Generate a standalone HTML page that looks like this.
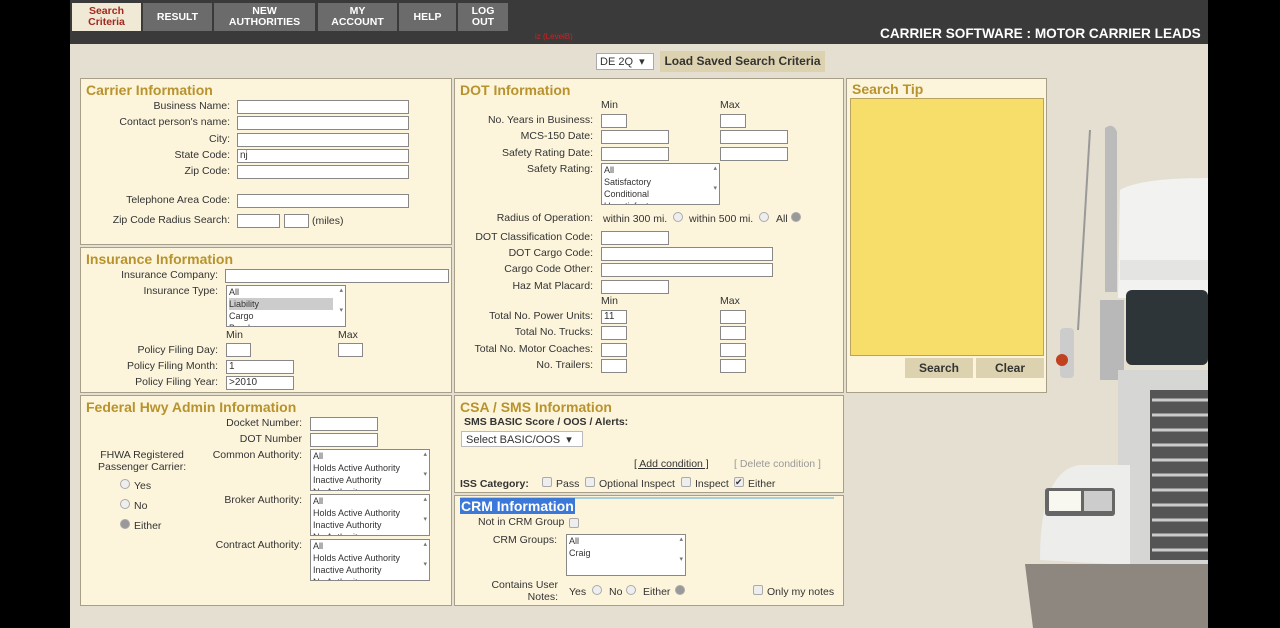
<!DOCTYPE html>
<html><head><meta charset="utf-8"><style>
*{box-sizing:border-box;margin:0;padding:0}
body{width:1280px;height:628px;background:#000;position:relative;overflow:hidden;font-family:"Liberation Sans",Arial,sans-serif;font-size:11px;color:#333}
#pg{position:absolute;left:70px;top:0;width:1138px;height:628px;background:#e5dfd1}
.a{position:absolute}
.hdr{left:70px;top:0;width:1138px;height:44px;background:#3a3a3a}
.tab{position:absolute;top:3px;height:28px;background:#6b6b6b;color:#fff;font-weight:bold;font-size:10.5px;text-align:center;line-height:11px;display:flex;align-items:center;justify-content:center}
.p{position:absolute;background:#fcf5dc;border:1px solid #a89f88}
.t{position:absolute;left:5px;top:3px;color:#b8922c;font-weight:bold;font-size:14px}
.l{position:absolute;text-align:right;font-size:10.5px;color:#333;white-space:nowrap}
.i{position:absolute;height:14px;background:#fff;border:1px solid #888;font-size:10px;padding-left:2px;line-height:12px}
.s{position:absolute;background:#fff;border:1px solid #888;font-size:9px;line-height:12px;padding-left:2px;overflow:hidden}
.s:after{content:"▴\A\A▾";white-space:pre;position:absolute;right:2px;top:0;font-size:7px;line-height:10px;color:#777}
.cb{position:absolute;width:10px;height:10px;border:1px solid #aaa;background:#eee;border-radius:2px}
.rd{position:absolute;width:10px;height:10px;border:1px solid #aaa;background:#eee;border-radius:50%}
.btn{position:absolute;background:#ddd2b0;font-weight:bold;font-size:12px;color:#333;text-align:center}
</style></head><body>
<div id="pg"></div>
<div class="a hdr"></div>
<div class="tab" style="left:72px;width:69px;background:#efe9d6;color:#a3271c">Search<br>Criteria</div>
<div class="tab" style="left:143px;width:69px">RESULT</div>
<div class="tab" style="left:214px;width:101px">NEW<br>AUTHORITIES</div>
<div class="tab" style="left:318px;width:79px">MY<br>ACCOUNT</div>
<div class="tab" style="left:399px;width:57px">HELP</div>
<div class="tab" style="left:458px;width:50px">LOG<br>OUT</div>
<div class="a" style="left:535px;top:32px;color:#c22;font-size:8px">iz (LevelB)</div>
<div class="a" style="left:880px;top:26px;color:#fff;font-weight:bold;font-size:13.6px">CARRIER SOFTWARE : MOTOR CARRIER LEADS</div>

<!-- truck -->
<svg class="a" style="left:1020px;top:100px" width="188" height="528" viewBox="0 0 188 528">
<path d="M85 28 q8-6 12 4 v160 h-12z" fill="#bbb"/>
<path d="M70 30 l-12 200" stroke="#999" stroke-width="2"/>
<rect x="40" y="228" width="14" height="50" fill="#ccc" rx="4"/>
<path d="M100 90 q20-12 88-12 v120 h-90z" fill="#f2f2f0"/>
<rect x="100" y="160" width="88" height="20" fill="#e4e4e2"/>
<rect x="106" y="190" width="82" height="75" fill="#2e3538" rx="6"/>
<rect x="80" y="200" width="24" height="80" fill="#b8b8b8"/>
<path d="M98 270 h90 v270 h-90z" fill="#d6d6d4"/>
<rect x="130" y="290" width="58" height="170" fill="#555"/>
<g stroke="#ccc" stroke-width="3">
<line x1="132" y1="300" x2="188" y2="300"/><line x1="132" y1="315" x2="188" y2="315"/><line x1="132" y1="330" x2="188" y2="330"/><line x1="132" y1="345" x2="188" y2="345"/><line x1="132" y1="360" x2="188" y2="360"/><line x1="132" y1="375" x2="188" y2="375"/><line x1="132" y1="390" x2="188" y2="390"/><line x1="132" y1="405" x2="188" y2="405"/><line x1="132" y1="420" x2="188" y2="420"/><line x1="132" y1="435" x2="188" y2="435"/><line x1="132" y1="450" x2="188" y2="450"/></g>
<path d="M20 460 q0-90 40-95 h50 v100z" fill="#ededeb"/>
<rect x="25" y="388" width="70" height="28" fill="#666" rx="3"/>
<rect x="29" y="391" width="32" height="20" fill="#f8f8f0"/>
<rect x="64" y="391" width="28" height="20" fill="#ccc"/>
<path d="M5 464 h183 v64 h-175z" fill="#8d8780"/>
<circle cx="42" cy="260" r="6" fill="#c04020"/>
</svg>

<!-- top controls -->
<div class="a" style="left:596px;top:53px;width:58px;height:17px;background:#fff;border:1px solid #aaa;font-size:11px;padding:1px 3px">DE 2Q &nbsp;▾</div>
<div class="btn" style="left:660px;top:51px;width:165px;height:21px;line-height:21px">Load Saved Search Criteria</div>

<!-- Carrier -->
<div class="p" style="left:80px;top:78px;width:372px;height:167px"><div class="t">Carrier Information</div></div>
<div class="l" style="right:1050px;top:100px">Business Name:</div><div class="i" style="left:237px;top:100px;width:172px"></div>
<div class="l" style="right:1050px;top:116px">Contact person's name:</div><div class="i" style="left:237px;top:116px;width:172px"></div>
<div class="l" style="right:1050px;top:133px">City:</div><div class="i" style="left:237px;top:133px;width:172px"></div>
<div class="l" style="right:1050px;top:149px">State Code:</div><div class="i" style="left:237px;top:149px;width:172px">nj</div>
<div class="l" style="right:1050px;top:165px">Zip Code:</div><div class="i" style="left:237px;top:165px;width:172px"></div>
<div class="l" style="right:1050px;top:194px">Telephone Area Code:</div><div class="i" style="left:237px;top:194px;width:172px"></div>
<div class="l" style="right:1050px;top:214px">Zip Code Radius Search:</div><div class="i" style="left:237px;top:214px;width:43px"></div><div class="i" style="left:284px;top:214px;width:25px"></div><div class="l" style="left:312px;top:215px">(miles)</div>

<!-- Insurance -->
<div class="p" style="left:80px;top:247px;width:372px;height:146px"><div class="t">Insurance Information</div></div>
<div class="l" style="right:1062px;top:269px">Insurance Company:</div><div class="i" style="left:225px;top:269px;width:224px"></div>
<div class="l" style="right:1062px;top:285px">Insurance Type:</div>
<div class="s" style="left:226px;top:285px;width:120px;height:42px">All<br><span style="background:#ccc;display:block;margin-right:12px">Liability</span>Cargo<br>Bond</div>
<div class="l" style="left:226px;top:329px">Min</div><div class="l" style="left:338px;top:329px">Max</div>
<div class="l" style="right:1062px;top:344px">Policy Filing Day:</div><div class="i" style="left:226px;top:343px;width:25px"></div><div class="i" style="left:338px;top:343px;width:25px"></div>
<div class="l" style="right:1062px;top:360px">Policy Filing Month:</div><div class="i" style="left:226px;top:360px;width:68px">1</div>
<div class="l" style="right:1062px;top:376px">Policy Filing Year:</div><div class="i" style="left:226px;top:376px;width:68px">&gt;2010</div>

<!-- Federal -->
<div class="p" style="left:80px;top:395px;width:372px;height:211px"><div class="t">Federal Hwy Admin Information</div></div>
<div class="l" style="right:978px;top:417px">Docket Number:</div><div class="i" style="left:310px;top:417px;width:68px"></div>
<div class="l" style="right:978px;top:433px">DOT Number</div><div class="i" style="left:310px;top:433px;width:68px"></div>
<div class="l" style="left:98px;top:449px;text-align:center">FHWA Registered<br>Passenger Carrier:</div>
<div class="l" style="right:978px;top:449px">Common Authority:</div>
<div class="s" style="left:310px;top:449px;width:120px;height:42px">All<br>Holds Active Authority<br>Inactive Authority<br>No Authority</div>
<div class="rd" style="left:120px;top:479px"></div><div class="l" style="left:134px;top:480px">Yes</div>
<div class="rd" style="left:120px;top:499px"></div><div class="l" style="left:134px;top:500px">No</div>
<div class="rd" style="left:120px;top:519px;background:#999"></div><div class="l" style="left:134px;top:520px">Either</div>
<div class="l" style="right:978px;top:494px">Broker Authority:</div>
<div class="s" style="left:310px;top:494px;width:120px;height:42px">All<br>Holds Active Authority<br>Inactive Authority<br>No Authority</div>
<div class="l" style="right:978px;top:539px">Contract Authority:</div>
<div class="s" style="left:310px;top:539px;width:120px;height:42px">All<br>Holds Active Authority<br>Inactive Authority<br>No Authority</div>

<!-- DOT -->
<div class="p" style="left:454px;top:78px;width:390px;height:315px"><div class="t">DOT Information</div></div>
<div class="l" style="left:601px;top:99px">Min</div><div class="l" style="left:720px;top:99px">Max</div>
<div class="l" style="right:687px;top:114px">No. Years in Business:</div><div class="i" style="left:601px;top:114px;width:26px"></div><div class="i" style="left:720px;top:114px;width:26px"></div>
<div class="l" style="right:687px;top:130px">MCS-150 Date:</div><div class="i" style="left:601px;top:130px;width:68px"></div><div class="i" style="left:720px;top:130px;width:68px"></div>
<div class="l" style="right:687px;top:147px">Safety Rating Date:</div><div class="i" style="left:601px;top:147px;width:68px"></div><div class="i" style="left:720px;top:147px;width:68px"></div>
<div class="l" style="right:687px;top:163px">Safety Rating:</div>
<div class="s" style="left:601px;top:163px;width:119px;height:42px">All<br>Satisfactory<br>Conditional<br>Unsatisfactory</div>
<div class="l" style="right:687px;top:212px">Radius of Operation:</div>
<div class="l" style="left:603px;top:213px">within 300 mi.</div><div class="rd" style="left:673px;top:212px"></div>
<div class="l" style="left:689px;top:213px">within 500 mi.</div><div class="rd" style="left:759px;top:212px"></div>
<div class="l" style="left:776px;top:213px">All</div><div class="rd" style="left:791px;top:212px;background:#999"></div>
<div class="l" style="right:687px;top:231px">DOT Classification Code:</div><div class="i" style="left:601px;top:231px;width:68px"></div>
<div class="l" style="right:687px;top:247px">DOT Cargo Code:</div><div class="i" style="left:601px;top:247px;width:172px"></div>
<div class="l" style="right:687px;top:263px">Cargo Code Other:</div><div class="i" style="left:601px;top:263px;width:172px"></div>
<div class="l" style="right:687px;top:280px">Haz Mat Placard:</div><div class="i" style="left:601px;top:280px;width:68px"></div>
<div class="l" style="left:601px;top:295px">Min</div><div class="l" style="left:720px;top:295px">Max</div>
<div class="l" style="right:687px;top:310px">Total No. Power Units:</div><div class="i" style="left:601px;top:310px;width:26px">11</div><div class="i" style="left:720px;top:310px;width:26px"></div>
<div class="l" style="right:687px;top:326px">Total No. Trucks:</div><div class="i" style="left:601px;top:326px;width:26px"></div><div class="i" style="left:720px;top:326px;width:26px"></div>
<div class="l" style="right:687px;top:343px">Total No. Motor Coaches:</div><div class="i" style="left:601px;top:343px;width:26px"></div><div class="i" style="left:720px;top:343px;width:26px"></div>
<div class="l" style="right:687px;top:359px">No. Trailers:</div><div class="i" style="left:601px;top:359px;width:26px"></div><div class="i" style="left:720px;top:359px;width:26px"></div>

<!-- CSA -->
<div class="p" style="left:454px;top:395px;width:390px;height:98px"><div class="t">CSA / SMS Information</div></div>
<div class="l" style="left:464px;top:416px;font-weight:bold">SMS BASIC Score / OOS / Alerts:</div>
<div class="a" style="left:461px;top:431px;width:122px;height:16px;background:#fff;border:1px solid #bbb;font-size:11px;padding:1px 4px">Select BASIC/OOS &nbsp;▾</div>
<div class="l" style="left:634px;top:458px;text-decoration:underline">[ Add condition ]</div>
<div class="l" style="left:734px;top:458px;color:#999">[ Delete condition ]</div>
<div class="l" style="left:460px;top:478px;font-weight:bold">ISS Category:</div>
<div class="cb" style="left:542px;top:477px"></div><div class="l" style="left:556px;top:478px">Pass</div>
<div class="cb" style="left:585px;top:477px"></div><div class="l" style="left:599px;top:478px">Optional Inspect</div>
<div class="cb" style="left:681px;top:477px"></div><div class="l" style="left:695px;top:478px">Inspect</div>
<div class="cb" style="left:734px;top:477px;font-size:9px;line-height:8px">✔</div><div class="l" style="left:748px;top:478px">Either</div>

<!-- CRM -->
<div class="p" style="left:454px;top:495px;width:390px;height:111px"></div>
<div class="a" style="left:460px;top:497px;width:374px;height:2px;background:#a9cfd8"></div>
<div class="a" style="left:460px;top:498px;background:#3b78d8;color:#fff;font-weight:bold;font-size:14px;padding:0 1px">CRM Information</div>
<div class="l" style="left:478px;top:516px">Not in CRM Group</div><div class="cb" style="left:569px;top:518px"></div>
<div class="l" style="right:723px;top:534px">CRM Groups:</div>
<div class="s" style="left:566px;top:534px;width:120px;height:42px">All<br>Craig</div>
<div class="l" style="right:722px;top:579px;line-height:12px">Contains User<br>Notes:</div>
<div class="l" style="left:569px;top:586px">Yes</div><div class="rd" style="left:592px;top:585px"></div>
<div class="l" style="left:609px;top:586px">No</div><div class="rd" style="left:626px;top:585px"></div>
<div class="l" style="left:643px;top:586px">Either</div><div class="rd" style="left:675px;top:585px;background:#999"></div>
<div class="cb" style="left:753px;top:585px"></div><div class="l" style="left:767px;top:586px">Only my notes</div>

<!-- Search tip -->
<div class="p" style="left:846px;top:78px;width:201px;height:315px"><div class="t" style="top:2px">Search Tip</div></div>
<div class="a" style="left:850px;top:98px;width:194px;height:258px;background:#f7dd6a;border:1px solid #b8a460"></div>
<div class="btn" style="left:905px;top:358px;width:68px;height:20px;line-height:20px">Search</div>
<div class="btn" style="left:976px;top:358px;width:68px;height:20px;line-height:20px">Clear</div>
</body></html>
